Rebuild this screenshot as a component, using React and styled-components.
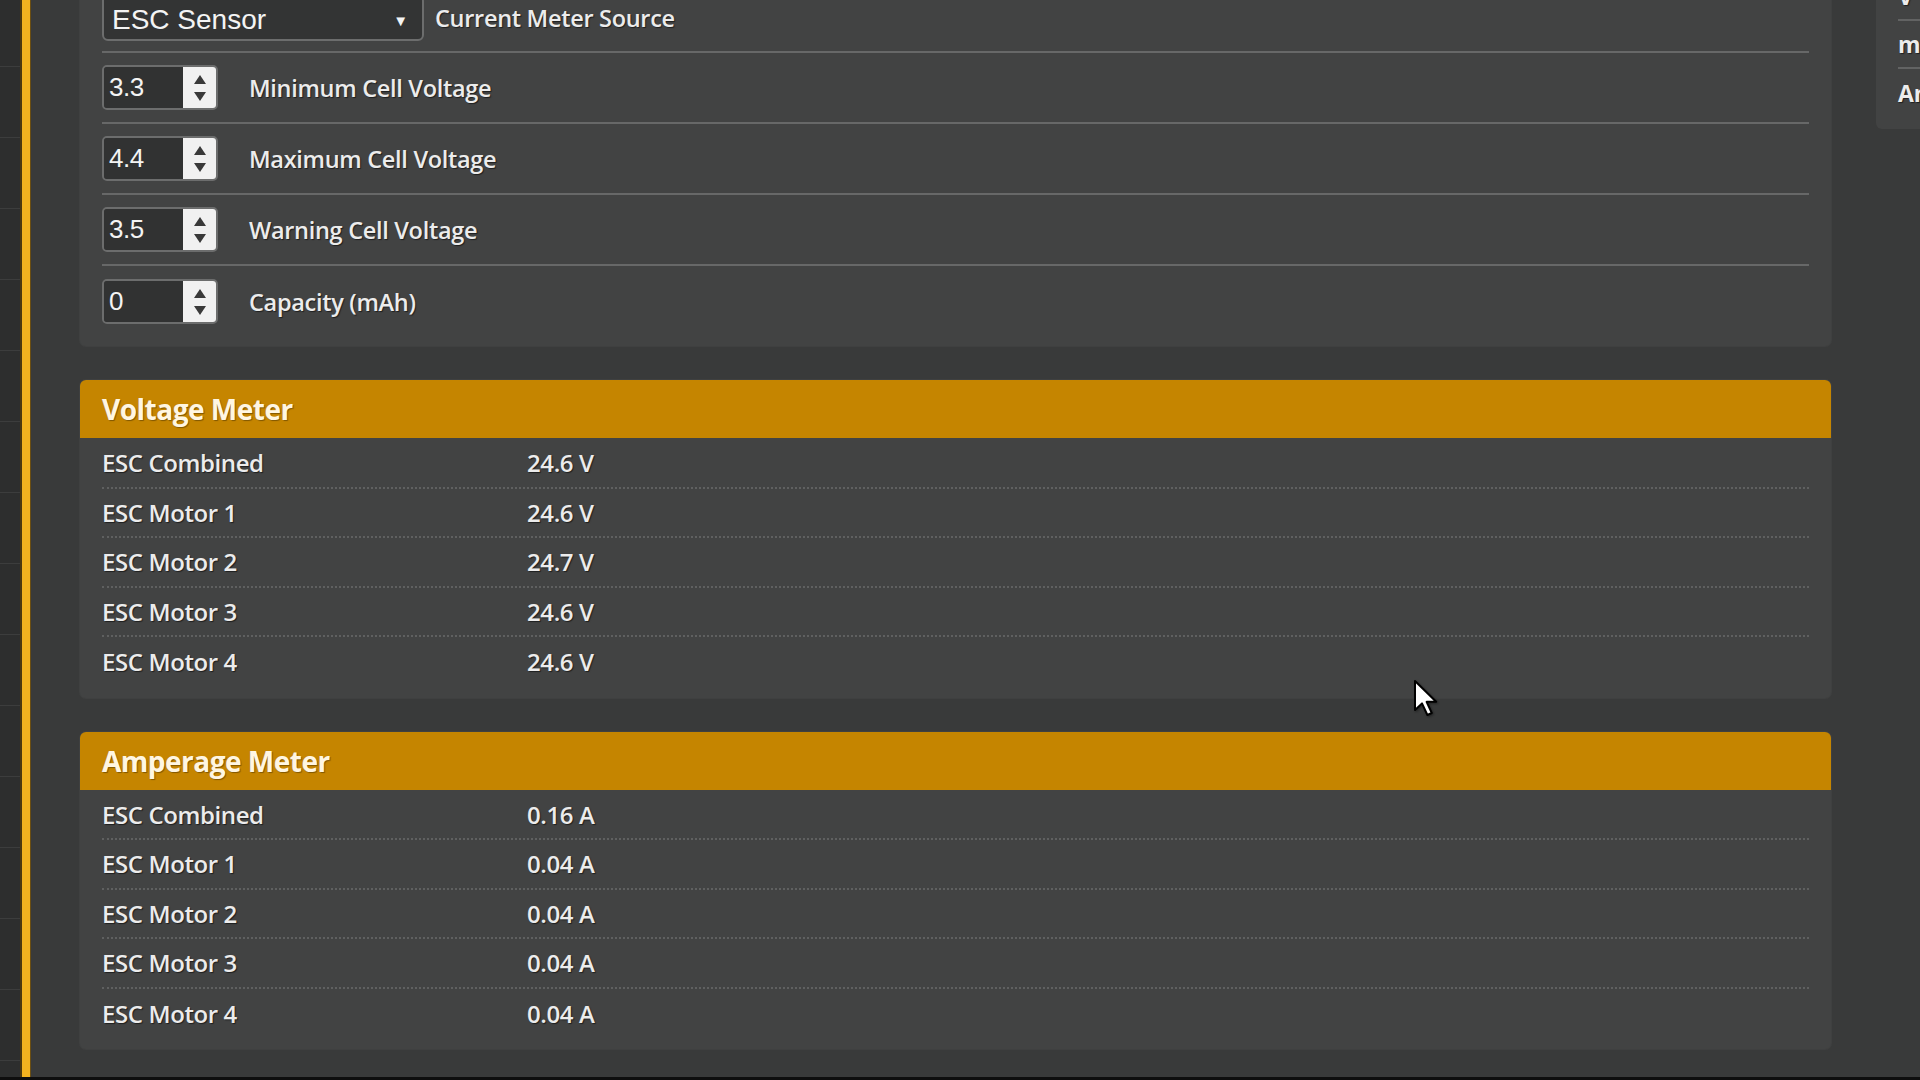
import React from 'react'
import styled, { createGlobalStyle } from 'styled-components'

const GlobalStyle = createGlobalStyle`
  html, body {
    margin: 0;
    padding: 0;
    background: #393a3a;
    overflow: hidden;
  }
  * { box-sizing: border-box; }
`

const batteryRows = [
  { value: '3.3', label: 'Minimum Cell Voltage' },
  { value: '4.4', label: 'Maximum Cell Voltage' },
  { value: '3.5', label: 'Warning Cell Voltage' },
  { value: '0', label: 'Capacity (mAh)' },
]

const voltageRows = [
  ['ESC Combined', '24.6 V'],
  ['ESC Motor 1', '24.6 V'],
  ['ESC Motor 2', '24.7 V'],
  ['ESC Motor 3', '24.6 V'],
  ['ESC Motor 4', '24.6 V'],
]

const amperageRows = [
  ['ESC Combined', '0.16 A'],
  ['ESC Motor 1', '0.04 A'],
  ['ESC Motor 2', '0.04 A'],
  ['ESC Motor 3', '0.04 A'],
  ['ESC Motor 4', '0.04 A'],
]

function Spinner() {
  return (
    <SpinBox>
      <svg width='16' height='32' viewBox='0 0 16 32'>
        <path d='M8 3 L14 12 L2 12 Z' fill='#3a3a3a' />
        <path d='M8 29 L14 20 L2 20 Z' fill='#3a3a3a' />
      </svg>
    </SpinBox>
  )
}

function MeterCard({ title, rows }) {
  return (
    <Card>
      <CardHeader>{title}</CardHeader>
      <MeterBody>
        {rows.map(([name, value]) => (
          <MeterRow key={name}>
            <MeterName>{name}</MeterName>
            <MeterValue>{value}</MeterValue>
          </MeterRow>
        ))}
      </MeterBody>
    </Card>
  )
}

function Cursor() {
  return (
    <CursorWrap>
      <svg width='26' height='38' viewBox='0 0 13 19'>
        <path
          d='M1 1 L1 15.5 L4.5 12.2 L7.2 18 L9.4 17 L6.8 11.4 L11.6 11.4 Z'
          fill='#fff'
          stroke='#000'
          strokeWidth='1'
          strokeLinejoin='round'
        />
      </svg>
    </CursorWrap>
  )
}

export default function App() {
  return (
    <Screen>
      <GlobalStyle />
      <Sidebar>
        <SideMenu>
          {Array.from({ length: 16 }).map((_, i) => (
            <SideItem key={i} />
          ))}
        </SideMenu>
        <Accent />
      </Sidebar>

      <Main>
        <Column>
          <Card>
            <BatteryBody>
              <SelectRow>
                <Select>
                  <span>ESC Sensor</span>
                  <Arrow>▼</Arrow>
                </Select>
                <SelectLabel>Current Meter Source</SelectLabel>
              </SelectRow>
              {batteryRows.map((row, i) => (
                <InputRow key={row.label} last={i === batteryRows.length - 1}>
                  <NumberInput>
                    <NumberValue>{row.value}</NumberValue>
                    <Spinner />
                  </NumberInput>
                  <Label>{row.label}</Label>
                </InputRow>
              ))}
            </BatteryBody>
          </Card>

          <MeterCard title='Voltage Meter' rows={voltageRows} />
          <MeterCard title='Amperage Meter' rows={amperageRows} />
        </Column>

        <SidePanel>
          <PanelItem>V</PanelItem>
          <PanelItem>mAh</PanelItem>
          <PanelItem last>Amperage</PanelItem>
        </SidePanel>
      </Main>

      <Cursor />
    </Screen>
  )
}

const Screen = styled.div`
  position: relative;
  display: flex;
  width: 1920px;
  height: 1080px;
  overflow: hidden;
  background: #393a3a;
  border-bottom: 3px solid #0e0e0e;
  font-family: 'Open Sans', 'Liberation Sans', sans-serif;
  color: #ececec;
`

const Sidebar = styled.aside`
  display: flex;
  flex: 0 0 31px;
  height: 100%;
`

const SideMenu = styled.div`
  flex: 0 0 20px;
  background: #2d2e2e;
  display: flex;
  flex-direction: column;
  padding-top: 66px;
`

const SideItem = styled.div`
  height: 71px;
  flex: 0 0 71px;
  border-top: 1px solid #3c3d3d;
`

const Accent = styled.div`
  flex: 0 0 11px;
  background: #f2b21f;
  border-left: 2px solid #4b3810;
  border-right: 1px solid #6b4e12;
`

const Main = styled.main`
  flex: 1;
  display: flex;
  align-items: flex-start;
  gap: 45px;
  padding-left: 49px;
`

const Column = styled.div`
  flex: 0 0 1751px;
  display: flex;
  flex-direction: column;
  gap: 34px;
  margin-top: -15px;
`

const Card = styled.section`
  background: #424343;
  border-radius: 6px;
  box-shadow: 0 0 0 1px rgba(255, 255, 255, 0.03);
  overflow: hidden;
`

const BatteryBody = styled.div`
  padding: 10px 22px 9px;
`

const SelectRow = styled.div`
  display: flex;
  align-items: center;
  gap: 11px;
  padding-bottom: 10px;
  border-bottom: 2px solid #676868;
`

const Select = styled.div`
  width: 322px;
  height: 46px;
  display: flex;
  align-items: center;
  justify-content: space-between;
  padding: 4px 14px 0 8px;
  background: #333434;
  border: 2px solid #6c6d6d;
  border-radius: 6px;
  font-family: 'Liberation Sans', Arial, sans-serif;
  font-size: 28px;
  color: #f4f4f4;
`

const Arrow = styled.span`
  font-size: 15px;
  color: #f4f4f4;
`

const SelectLabel = styled.span`
  font-size: 23.5px;
  font-weight: 600;
  letter-spacing: -0.3px;
  text-shadow: 1px 1px 1px rgba(0, 0, 0, 0.55);
`

const InputRow = styled.div`
  display: flex;
  align-items: center;
  gap: 31px;
  height: 71px;
  border-bottom: ${(p) => (p.last ? 'none' : '2px solid #676868')};
`

const NumberInput = styled.div`
  width: 116px;
  height: 45px;
  display: flex;
  border: 2px solid #6c6d6d;
  border-radius: 5px;
  overflow: hidden;
`

const NumberValue = styled.div`
  flex: 1;
  display: flex;
  align-items: center;
  padding-left: 5px;
  background: #313232;
  font-family: 'Liberation Sans', Arial, sans-serif;
  font-size: 26px;
  letter-spacing: -0.5px;
  color: #f4f4f4;
`

const SpinBox = styled.div`
  flex: 0 0 33px;
  display: flex;
  align-items: center;
  justify-content: center;
  background: #f1f1f1;
`

const Label = styled.span`
  font-size: 23.5px;
  font-weight: 600;
  letter-spacing: -0.3px;
  text-shadow: 1px 1px 1px rgba(0, 0, 0, 0.55);
`

const CardHeader = styled.header`
  height: 58px;
  display: flex;
  align-items: center;
  padding-left: 22px;
  background: #c58500;
  font-size: 28px;
  font-weight: 700;
  letter-spacing: -0.5px;
  color: #fff6e2;
  text-shadow: 1px 1px 1px rgba(0, 0, 0, 0.35);
`

const MeterBody = styled.div`
  padding: 1px 22px 11px;
`

const MeterRow = styled.div`
  display: flex;
  align-items: center;
  height: 49.5px;
  border-bottom: 2px dotted #5f6060;

  &:last-child {
    border-bottom: none;
  }
`

const MeterName = styled.span`
  flex: 0 0 425px;
  font-size: 24px;
  font-weight: 600;
  letter-spacing: -0.4px;
  text-shadow: 1px 1px 1px rgba(0, 0, 0, 0.55);
`

const MeterValue = styled(MeterName)`
  flex: 1;
`

const SidePanel = styled.aside`
  flex: 0 0 220px;
  margin-top: -27px;
  padding: 0 22px 12px;
  background: #424343;
  border-radius: 6px;
`

const PanelItem = styled.div`
  height: 48px;
  display: flex;
  align-items: center;
  font-size: 23px;
  font-weight: 700;
  text-shadow: 1px 1px 1px rgba(0, 0, 0, 0.55);
  border-bottom: ${(p) => (p.last ? 'none' : '2px solid #626363')};
`

const CursorWrap = styled.div`
  position: absolute;
  left: 1413px;
  top: 679px;
  pointer-events: none;
  filter: drop-shadow(1px 1px 1px rgba(0, 0, 0, 0.4));
`
